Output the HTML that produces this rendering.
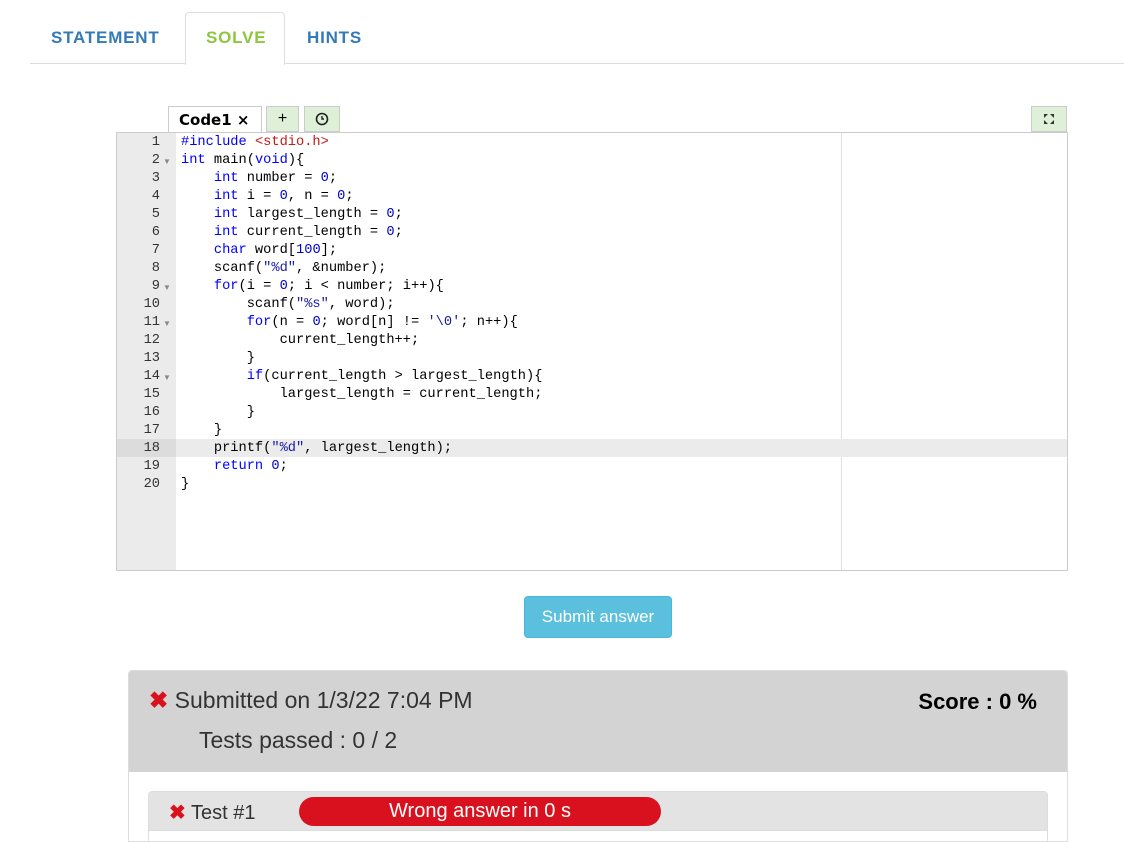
<!DOCTYPE html><html><head><style>
body{margin:0;background:#fff;width:1124px;height:836px;overflow:hidden;position:relative;font-family:"Liberation Sans",sans-serif}
.a{position:absolute}
.tab{position:absolute;top:28px;font-weight:bold;font-size:17px;letter-spacing:.8px;color:#337ab7}
pre{margin:0;font-family:"Liberation Mono",monospace;font-size:13.7px;line-height:18px}
.k{color:#0000ff}.n{color:#0000cd}.s{color:#1a1aa6}.r{color:#c41a16}.o{color:#687687}
</style></head><body>
<div class="a" style="left:30px;top:63px;width:1094px;height:1px;background:#ddd"></div>
<div class="a" style="left:185px;top:12px;width:98px;height:52px;border:1px solid #ddd;border-bottom:none;border-radius:4px 4px 0 0;background:#fff"></div>
<div class="tab" style="left:51px">STATEMENT</div>
<div class="tab" style="left:206px;color:#8dc63f">SOLVE</div>
<div class="tab" style="left:307px">HINTS</div>

<div class="a" style="left:168px;top:106px;width:92px;height:26px;border:1px solid #ccc;border-bottom:none;background:#fff;font-weight:bold;font-size:15px;line-height:26px;text-indent:10px;font-family:'DejaVu Sans',sans-serif">Code1 ×</div>
<div class="a" style="left:266px;top:106px;width:31px;height:24px;border:1px solid #ccc;background:#dff0d8;text-align:center;line-height:24px;font-size:16px">+</div>
<div class="a" style="left:304px;top:106px;width:34px;height:24px;border:1px solid #ccc;background:#dff0d8"><svg width="34" height="24"><circle cx="17" cy="12" r="5.5" fill="none" stroke="#222" stroke-width="1.6"/><path d="M17 9v3h2" stroke="#222" stroke-width="1.4" fill="none"/></svg></div>
<div class="a" style="left:1031px;top:106px;width:34px;height:24px;border:1px solid #ccc;background:#dff0d8"><svg width="34" height="24"><path d="M12 7h4l-4 4zM22 7h-4l4 4zM12 17h4l-4-4zM22 17h-4l4-4z" fill="#333"/></svg></div>

<div class="a" style="left:116px;top:132px;width:950px;height:437px;border:1px solid #ccc;background:#fff;overflow:hidden">
 <div class="a" style="left:0;top:0;width:59px;height:437px;background:#ebebeb"></div>
 <div class="a" style="left:724px;top:0;width:1px;height:437px;background:#e0e0e0"></div>
 <div class="a" style="left:0;top:306px;width:59px;height:18px;background:#dcdcdc"></div>
 <div class="a" style="left:59px;top:306px;width:891px;height:18px;background:#ebebeb"></div>
 <pre class="a" style="left:0;top:1px;width:43px;text-align:right;color:#333">1
2
3
4
5
6
7
8
9
10
11
12
13
14
15
16
17
18
19
20</pre>
 <div class="a" style="left:46px;top:25px;color:#888;font-size:8px;line-height:8px">▼</div>
 <div class="a" style="left:46px;top:151px;color:#888;font-size:8px;line-height:8px">▼</div>
 <div class="a" style="left:46px;top:187px;color:#888;font-size:8px;line-height:8px">▼</div>
 <div class="a" style="left:46px;top:241px;color:#888;font-size:8px;line-height:8px">▼</div>
 <pre class="a" style="left:64px;top:1px;color:#000"><span class="k">#include</span> <span class="r">&lt;stdio.h&gt;</span>
<span class="k">int</span> main(<span class="k">void</span>){
    <span class="k">int</span> number = <span class="n">0</span>;
    <span class="k">int</span> i = <span class="n">0</span>, n = <span class="n">0</span>;
    <span class="k">int</span> largest_length = <span class="n">0</span>;
    <span class="k">int</span> current_length = <span class="n">0</span>;
    <span class="k">char</span> word[<span class="n">100</span>];
    scanf(<span class="s">"%d"</span>, &amp;number);
    <span class="k">for</span>(i = <span class="n">0</span>; i &lt; number; i++){
        scanf(<span class="s">"%s"</span>, word);
        <span class="k">for</span>(n = <span class="n">0</span>; word[n] != <span class="s">'\0'</span>; n++){
            current_length++;
        }
        <span class="k">if</span>(current_length &gt; largest_length){
            largest_length = current_length;
        }
    }
    printf(<span class="s">"%d"</span>, largest_length);
    <span class="k">return</span> <span class="n">0</span>;
}</pre>
</div>

<div class="a" style="left:524px;top:596px;width:146px;height:40px;background:#5bc0de;border:1px solid #46b8da;border-radius:4px;color:#fff;font-size:17px;text-align:center;line-height:40px">Submit answer</div>

<div class="a" style="left:128px;top:670px;width:938px;height:170px;border:1px solid #ddd;border-radius:4px 4px 0 0;background:#fff;overflow:hidden">
 <div class="a" style="left:0;top:0;width:938px;height:101px;background:#d3d3d3"></div>
 <div class="a" style="left:20px;top:16px;font-size:23px;color:#333"><span style="color:#d9111e;font-weight:bold">✖</span> Submitted on 1/3/22 7:04 PM</div>
 <div class="a" style="left:70px;top:56px;font-size:23px;color:#333">Tests passed : 0 / 2</div>
 <div class="a" style="right:30px;top:18px;font-size:22px;font-weight:bold;color:#000">Score : 0 %</div>
 <div class="a" style="left:19px;top:120px;width:898px;height:60px;border:1px solid #ddd;border-radius:4px;background:#fff">
  <div class="a" style="left:0;top:0;width:898px;height:38px;background:#e3e3e3;border-bottom:1px solid #ddd"></div>
  <div class="a" style="left:20px;top:8px;font-size:20px;color:#333"><span style="color:#d9111e;font-weight:bold">✖</span> Test #1</div>
  <div class="a" style="left:150px;top:5px;width:362px;height:29px;background:#d9111e;border-radius:15px;color:#fff;font-size:20px;text-align:center;line-height:29px">Wrong answer in 0 s</div>
 </div>
</div>
</body></html>
